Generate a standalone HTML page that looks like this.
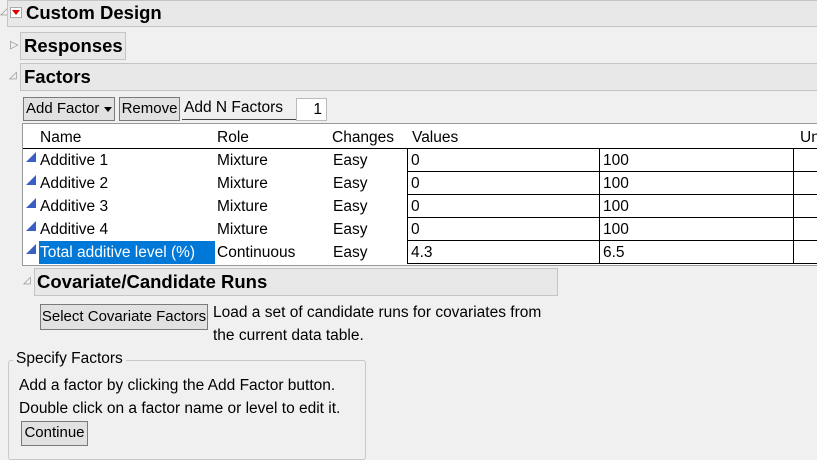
<!DOCTYPE html><html><head><style>
body{margin:0;width:817px;height:451px;background:#f0f0f0;font-family:"Liberation Sans",sans-serif;font-size:15.5px;color:#000;position:relative;overflow:hidden}
.a{position:absolute;white-space:nowrap}
.bar{position:absolute;background:#e8e8e8;border:1px solid #c4c4c4;box-sizing:border-box}
.h{font-weight:bold;font-size:18.5px}
.btn{position:absolute;background:#e1e1e1;border:1px solid #7a7a7a;box-sizing:border-box;text-align:center;line-height:22px;white-space:nowrap;overflow:hidden;font-size:15px}
.tri{position:absolute;width:0;height:0}
.c{position:absolute;border:1px solid #000;box-sizing:border-box;padding-left:3px;line-height:23px;background:#fff}
.ic{position:absolute;width:0;height:0;border-left:10px solid transparent;border-bottom:10px solid #3a5fc4}
</style></head><body>
<div class="a" style="left:0;top:6px;color:#888;font-size:10px">◿</div>
<div class="bar" style="left:7px;top:0;width:812px;height:27px"></div>
<div class="a" style="left:10px;top:7px;width:12px;height:11px;background:#fff;border:1px solid #aaa;box-sizing:border-box"></div>
<div class="tri" style="left:12px;top:10px;border-left:4px solid transparent;border-right:4px solid transparent;border-top:5px solid #d00"></div>
<div class="a h" style="left:26px;top:2px">Custom Design</div>

<div class="a" style="left:10px;top:38px;color:#888;font-size:11px">▷</div>
<div class="bar" style="left:20px;top:32px;width:106px;height:28px"></div>
<div class="a h" style="left:24px;top:35px">Responses</div>

<div class="a" style="left:9px;top:70px;color:#888;font-size:10px">◿</div>
<div class="bar" style="left:20px;top:63px;width:800px;height:28px"></div>
<div class="a h" style="left:24px;top:66px">Factors</div>

<div class="btn" style="left:23px;top:97px;width:92px;height:24px;text-align:left;padding-left:2px">Add Factor</div>
<div class="tri" style="left:104px;top:107px;border-left:4px solid transparent;border-right:4px solid transparent;border-top:5px solid #000"></div>
<div class="btn" style="left:119px;top:97px;width:61px;height:24px">Remove</div>
<div class="a" style="left:184px;top:99px">Add N Factors</div>
<div class="a" style="left:182px;top:119px;width:114px;border-top:1px solid #444"></div>
<div class="a" style="left:296px;top:98px;width:31px;height:23px;background:#fff;border:1px solid #bbb;box-sizing:border-box;text-align:right;padding-right:4px;line-height:21px">1</div>

<div class="a" style="left:22px;top:123px;width:800px;height:143px;background:#fff;border:1px solid #999;box-sizing:border-box"></div>
<div class="a" style="left:23px;top:148px;width:794px;border-top:1px solid #000"></div>
<div class="a" style="left:40px;top:129px">Name</div>
<div class="a" style="left:217px;top:129px">Role</div>
<div class="a" style="left:332px;top:129px">Changes</div>
<div class="a" style="left:412px;top:129px">Values</div>
<div class="a" style="left:800px;top:129px">Un</div>

<div class="ic" style="left:26px;top:152px"></div><div class="a" style="left:40px;top:152px">Additive 1</div><div class="a" style="left:217px;top:152px">Mixture</div><div class="a" style="left:333px;top:152px">Easy</div>
<div class="ic" style="left:26px;top:175px"></div><div class="a" style="left:40px;top:175px">Additive 2</div><div class="a" style="left:217px;top:175px">Mixture</div><div class="a" style="left:333px;top:175px">Easy</div>
<div class="ic" style="left:26px;top:198px"></div><div class="a" style="left:40px;top:198px">Additive 3</div><div class="a" style="left:217px;top:198px">Mixture</div><div class="a" style="left:333px;top:198px">Easy</div>
<div class="ic" style="left:26px;top:221px"></div><div class="a" style="left:40px;top:221px">Additive 4</div><div class="a" style="left:217px;top:221px">Mixture</div><div class="a" style="left:333px;top:221px">Easy</div>
<div class="ic" style="left:26px;top:244px"></div><div class="a" style="left:39px;top:241px;width:176px;height:23px;background:#0078d7"></div><div class="a" style="left:40px;top:244px;color:#fff">Total additive level (%)</div><div class="a" style="left:217px;top:244px">Continuous</div><div class="a" style="left:333px;top:244px">Easy</div>

<div class="c" style="left:407px;top:148px;width:193px;height:24px">0</div><div class="c" style="left:599px;top:148px;width:195px;height:24px">100</div><div class="c" style="left:793px;top:148px;width:30px;height:24px"></div>
<div class="c" style="left:407px;top:171px;width:193px;height:24px">0</div><div class="c" style="left:599px;top:171px;width:195px;height:24px">100</div><div class="c" style="left:793px;top:171px;width:30px;height:24px"></div>
<div class="c" style="left:407px;top:194px;width:193px;height:24px">0</div><div class="c" style="left:599px;top:194px;width:195px;height:24px">100</div><div class="c" style="left:793px;top:194px;width:30px;height:24px"></div>
<div class="c" style="left:407px;top:217px;width:193px;height:24px">0</div><div class="c" style="left:599px;top:217px;width:195px;height:24px">100</div><div class="c" style="left:793px;top:217px;width:30px;height:24px"></div>
<div class="c" style="left:407px;top:240px;width:193px;height:24px">4.3</div><div class="c" style="left:599px;top:240px;width:195px;height:24px">6.5</div><div class="c" style="left:793px;top:240px;width:30px;height:24px"></div>

<div class="a" style="left:23px;top:275px;color:#888;font-size:10px">◿</div>
<div class="bar" style="left:34px;top:268px;width:524px;height:28px"></div>
<div class="a h" style="left:37px;top:271px">Covariate/Candidate Runs</div>
<div class="btn" style="left:40px;top:304px;width:168px;height:26px;line-height:24px">Select Covariate Factors</div>
<div class="a" style="left:213px;top:301px;line-height:23px">Load a set of candidate runs for covariates from<br>the current data table.</div>

<div class="a" style="left:8px;top:360px;width:358px;height:100px;border:1px solid #c8c8c8;border-radius:3px;box-sizing:border-box"></div>
<div class="a" style="left:13px;top:350px;background:#f0f0f0;padding:0 3px">Specify Factors</div>
<div class="a" style="left:19px;top:374px;line-height:23px">Add a factor by clicking the Add Factor button.<br>Double click on a factor name or level to edit it.</div>
<div class="btn" style="left:21px;top:421px;width:67px;height:25px">Continue</div>
</body></html>
